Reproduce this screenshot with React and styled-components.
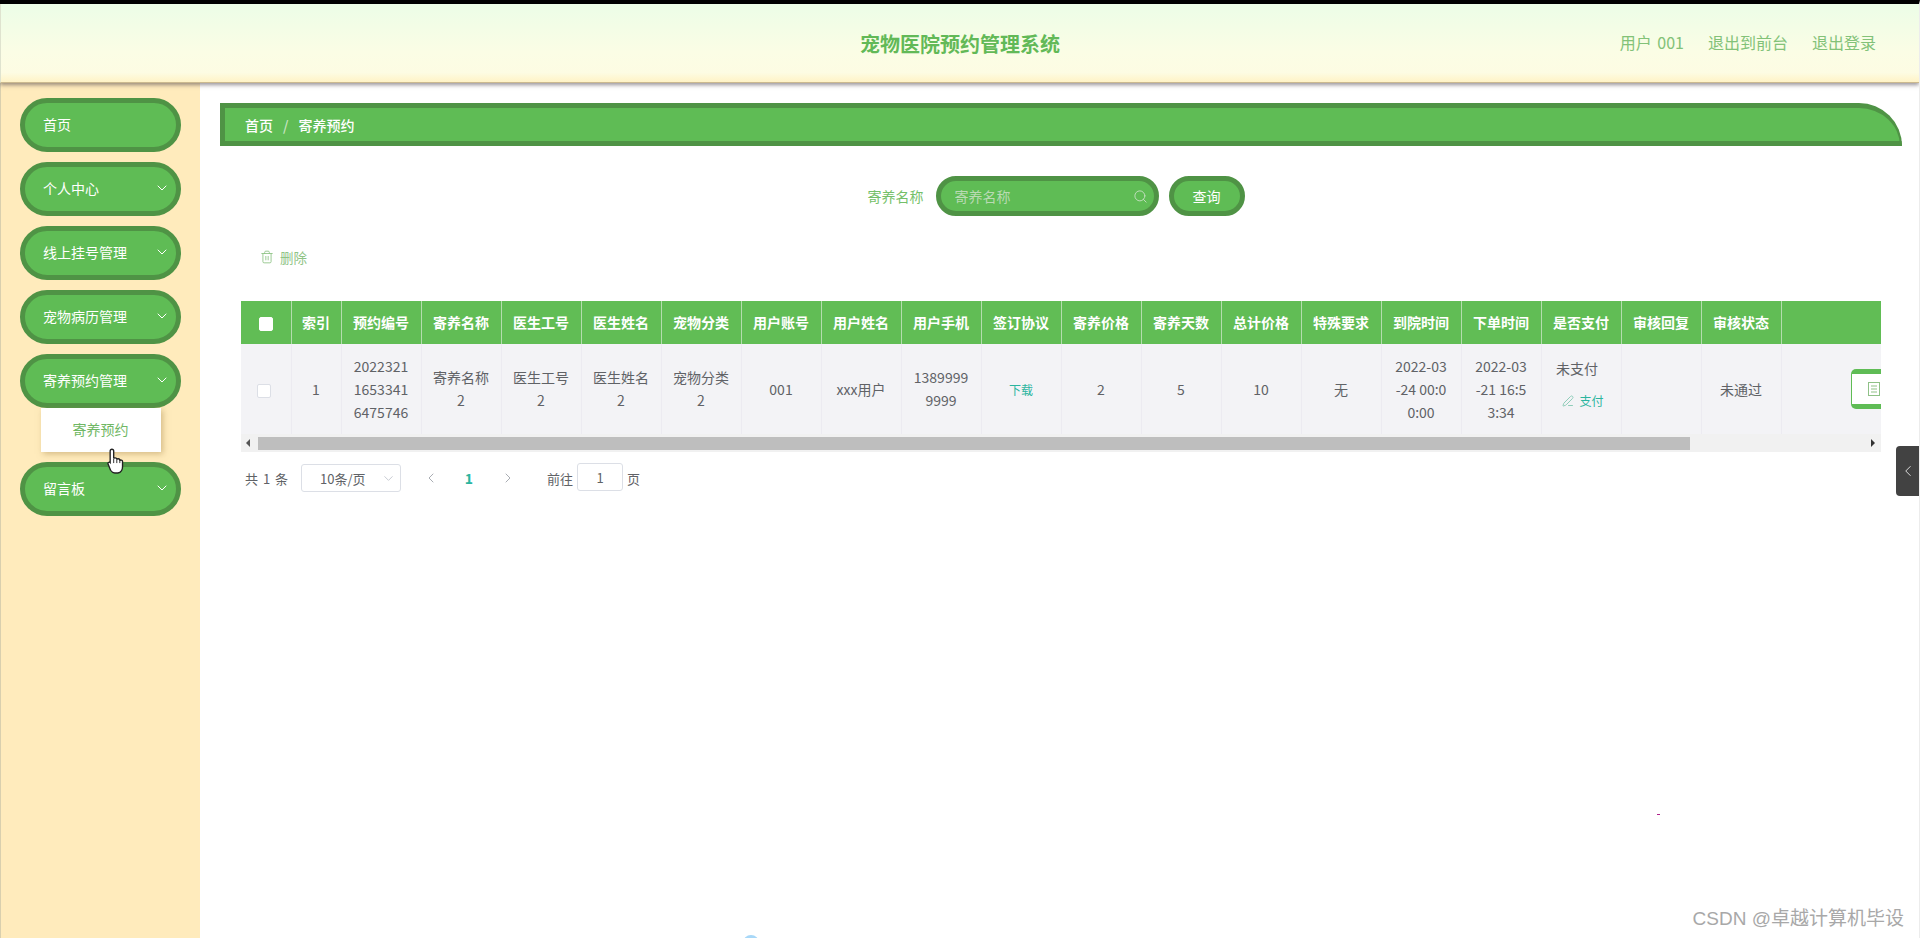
import React from 'react';
import styled, { createGlobalStyle } from 'styled-components';
import { ChevronDown, ChevronLeft, ChevronRight, PenLine, Search, Trash2 } from 'lucide-react';

const GREEN = '#5fbc55';
const DARK_GREEN = '#4f9345';
const TEAL = '#2bb59f';

const GlobalStyle = createGlobalStyle`
  html, body {
    margin: 0;
    padding: 0;
    height: 100%;
    background: #fff;
    font-family: "Noto Sans CJK SC", "Liberation Sans", sans-serif;
  }
  * { box-sizing: border-box; }
`;

const Page = styled.div`
  position: relative;
  height: 100vh;
  overflow: hidden;
  display: flex;
  flex-direction: column;
  border-top: 4px solid #000;
  border-right: 1px solid #ececec;
`;

const Header = styled.header`
  position: relative;
  z-index: 2;
  flex: 0 0 79px;
  display: grid;
  grid-template-columns: 1fr auto 1fr;
  align-items: center;
  padding-bottom: 2px;
  border-left: 1px solid #dfe3cf;
  border-bottom: 1px solid #cbb98f;
  background: linear-gradient(180deg, #ecfde7 0%, #fbfde5 62%, #fdfce3 88%, #fff3c6 100%);
  box-shadow: 0 2px 4px rgba(70, 60, 70, 0.55);
`;

const Title = styled.div`
  grid-column: 2;
  padding-top: 2px;
  font-size: 20px;
  font-weight: 700;
  color: #62b957;
`;

const HeaderLinks = styled.div`
  grid-column: 3;
  justify-self: end;
  display: flex;
  gap: 24px;
  padding-right: 43px;
  font-size: 16px;
  word-spacing: 2px;
  color: #82c278;
`;

const Body = styled.div`
  flex: 1;
  display: flex;
  min-height: 0;
`;

const Sidebar = styled.aside`
  flex: 0 0 200px;
  display: flex;
  flex-direction: column;
  gap: 10px;
  padding: 15px 19px 0 19px;
  background: #ffebbc;
  border-left: 1px solid #d9cfae;
`;

const MenuGroup = styled.div`
  display: flex;
  flex-direction: column;
`;

const MenuItem = styled.div`
  height: 54px;
  display: flex;
  align-items: center;
  justify-content: space-between;
  padding: 0 6px 2px 18px;
  border: 5px solid ${DARK_GREEN};
  border-radius: 27px;
  background: ${GREEN};
  color: #fff;
  font-size: 14px;
`;

const SubMenu = styled.div`
  align-self: center;
  width: 120px;
  height: 44px;
  display: flex;
  align-items: center;
  justify-content: center;
  padding-bottom: 2px;
  background: #fff;
  color: #6fb764;
  font-size: 14px;
  box-shadow: 2px 2px 6px rgba(170, 140, 80, 0.5);
`;

const Main = styled.main`
  flex: 1;
  min-width: 0;
  padding: 20px 17px 0 20px;
`;

const Breadcrumb = styled.div`
  height: 43px;
  display: flex;
  align-items: center;
  padding-left: 20px;
  border-style: solid;
  border-color: ${DARK_GREEN};
  border-width: 5px 2px 5px 5px;
  border-top-right-radius: 44px;
  background: ${GREEN};
  color: #fff;
  font-size: 14px;
  font-weight: 500;
`;

const Separator = styled.span`
  margin: 0 10px;
  color: #c9e4c4;
`;

const Content = styled.div`
  padding: 0 21px 0 21px;
`;

const SearchForm = styled.form`
  display: flex;
  justify-content: center;
  align-items: center;
  margin: 30px 10px 0 0;
`;

const SearchLabel = styled.label`
  margin-right: 12px;
  color: #74bf69;
  font-size: 14px;
`;

const SearchBox = styled.div`
  width: 223px;
  height: 40px;
  display: flex;
  align-items: center;
  padding: 0 6px 0 14px;
  border: 5px solid ${DARK_GREEN};
  border-radius: 20px;
  background: ${GREEN};
  color: #c4dfc0;
`;

const SearchInput = styled.input`
  flex: 1;
  min-width: 0;
  border: none;
  outline: none;
  padding: 0;
  background: transparent;
  font: inherit;
  font-size: 14px;
  color: #fff;
  &::placeholder { color: #b9dab3; opacity: 1; }
`;

const SearchButton = styled.button`
  width: 76px;
  height: 40px;
  margin-left: 10px;
  padding: 0;
  border: 5px solid ${DARK_GREEN};
  border-radius: 20px;
  background: ${GREEN};
  color: #fff;
  font: inherit;
  font-size: 14px;
`;

const Toolbar = styled.div`
  height: 40px;
  display: flex;
  align-items: center;
  gap: 6px;
  margin: 21px 0 24px;
  padding-left: 19px;
  color: #8fc486;
  font-size: 13.5px;
`;

const TableWrap = styled.div`
  overflow: hidden;
`;

const Table = styled.table`
  width: 1840px;
  table-layout: fixed;
  border-collapse: collapse;
  font-size: 14px;
  color: #606266;
`;

const Th = styled.th`
  height: 43px;
  padding: 0 0 2px;
  border-right: 1px solid #b4dcae;
  background: #61bd55;
  color: #fff;
  font-weight: 700;
  text-align: center;
`;

const Td = styled.td`
  height: 90px;
  padding: 0 10px;
  border-right: 1px solid #ecebf1;
  background: #f3f3f6;
  line-height: 23px;
  text-align: center;
  word-break: break-all;
  white-space: pre-line;
`;

const ActionTd = styled(Td)`
  padding: 0 0 0 69px;
  text-align: left;
`;

const Check = styled.span`
  display: inline-block;
  vertical-align: middle;
  width: 14px;
  height: 14px;
  margin-right: ${(p) => (p.$head ? '0' : '4px')};
  border: 1px solid ${(p) => (p.$head ? '#fff' : '#dcdfe6')};
  border-radius: 2px;
  background: #fff;
`;

const LinkText = styled.span`
  color: ${TEAL};
  font-size: 12px;
`;

const PayCell = styled.div`
  margin-top: -8px;
`;

const PayStatus = styled.div`
  padding-right: 8px;
`;

const PayLink = styled(LinkText)`
  display: inline-flex;
  align-items: center;
  gap: 5px;
  margin-top: 9px;
  padding-left: 4px;
  svg { color: #8fcdb9; }
`;

const ActionButton = styled.div`
  width: 90px;
  height: 40px;
  display: flex;
  align-items: center;
  padding-left: 16px;
  border: solid ${GREEN};
  border-width: 5px 0 5px 1px;
  border-radius: 5px;
  background: #fff;
`;

const ScrollBar = styled.div`
  height: 18px;
  display: flex;
  align-items: center;
  padding: 0 5px;
  background: #f1f1f1;
`;

const ScrollThumb = styled.div`
  width: 1432px;
  height: 13px;
  margin-left: 8px;
  background: #bebebe;
`;

const ScrollArrow = styled.span`
  width: 0;
  height: 0;
  border-top: 4px solid transparent;
  border-bottom: 4px solid transparent;
  border-right: ${(p) => (p.$right ? 'none' : '4px solid #555')};
  border-left: ${(p) => (p.$right ? '4px solid #333' : 'none')};
  margin-left: ${(p) => (p.$right ? 'auto' : '0')};
  margin-right: ${(p) => (p.$right ? '1px' : '0')};
`;

const Pagination = styled.div`
  display: flex;
  align-items: center;
  height: 28px;
  margin-top: 13px;
  padding: 0 0 2px 4px;
  font-size: 13px;
  color: #606266;
`;

const Total = styled.span`
  width: 42px;
  margin-right: 14px;
  white-space: nowrap;
  word-spacing: 2px;
`;

const PageSize = styled.div`
  width: 100px;
  height: 28px;
  display: flex;
  align-items: center;
  justify-content: space-between;
  padding: 0 4px 0 18px;
  border: 1px solid #dcdfe6;
  border-radius: 3px;
  color: #606266;
  svg { color: #c0c4cc; }
`;

const Pager = styled.span`
  width: 38px;
  display: flex;
  justify-content: center;
  color: ${(p) => (p.$active ? TEAL : '#a9adb3')};
  font-weight: ${(p) => (p.$active ? 700 : 400)};
  font-size: 14px;
  margin-left: ${(p) => p.$gap || 0}px;
`;

const Jump = styled.span`
  margin-left: 20px;
`;

const JumpBox = styled.div`
  width: 46px;
  height: 28px;
  display: flex;
  align-items: center;
  justify-content: center;
  margin: -2px 4px 0 4px;
  border: 1px solid #dcdfe6;
  border-radius: 3px;
`;

const SideToggle = styled.div`
  position: absolute;
  top: 442px;
  right: -1px;
  width: 24px;
  height: 50px;
  display: flex;
  align-items: center;
  justify-content: center;
  border-radius: 4px 0 0 4px;
  background: #424242;
  color: #ddd;
`;

const Watermark = styled.div`
  position: absolute;
  right: 15px;
  bottom: 7px;
  font-family: "Liberation Sans", "Noto Sans CJK SC", sans-serif;
  font-size: 19px;
  line-height: 24px;
  color: #a8a8a8;
`;

const Speck = styled.div`
  position: absolute;
  left: 1657px;
  top: 810px;
  width: 3px;
  height: 1px;
  background: #b0208a;
`;

const BlueDot = styled.div`
  position: absolute;
  left: 743px;
  top: 931px;
  width: 16px;
  height: 16px;
  border-radius: 50%;
  background: #a8d8f8;
`;

const HandCursor = styled.svg`
  position: absolute;
  left: 107px;
  top: 444px;
`;

const headers = [
  '索引', '预约编号', '寄养名称', '医生工号', '医生姓名', '宠物分类', '用户账号', '用户姓名', '用户手机',
  '签订协议', '寄养价格', '寄养天数', '总计价格', '特殊要求', '到院时间', '下单时间', '是否支付', '审核回复', '审核状态',
];

const row = [
  '1', '202232116533416475746', '寄养名称2', '医生工号2', '医生姓名2', '宠物分类2', '001', 'xxx用户', '13899999999',
];

const menus = ['个人中心', '线上挂号管理', '宠物病历管理'];

const TicketIcon = () => (
  <svg width="12" height="14" viewBox="0 0 12 14" fill="none" stroke="#8fc187" strokeWidth="1">
    <rect x="0.5" y="0.5" width="11" height="13" />
    <path d="M3 4h6M3 7h6M3 10h6" />
  </svg>
);

const MenuArrow = () => <ChevronDown size={16} strokeWidth={1.5} />;

const App = () => {
  return (
    <Page>
      <GlobalStyle />
      <Header>
        <Title>宠物医院预约管理系统</Title>
        <HeaderLinks>
          <span>用户 001</span>
          <span>退出到前台</span>
          <span>退出登录</span>
        </HeaderLinks>
      </Header>
      <Body>
        <Sidebar>
          <MenuItem>首页</MenuItem>
          {menus.map((m) => (
            <MenuItem key={m}>
              {m}
              <MenuArrow />
            </MenuItem>
          ))}
          <MenuGroup>
            <MenuItem>
              寄养预约管理
              <MenuArrow />
            </MenuItem>
            <SubMenu>寄养预约</SubMenu>
          </MenuGroup>
          <MenuItem>
            留言板
            <MenuArrow />
          </MenuItem>
        </Sidebar>
        <Main>
          <Breadcrumb>
            首页
            <Separator>/</Separator>
            寄养预约
          </Breadcrumb>
          <Content>
            <SearchForm>
              <SearchLabel>寄养名称</SearchLabel>
              <SearchBox>
                <SearchInput placeholder="寄养名称" readOnly />
                <Search size={15} strokeWidth={1.5} />
              </SearchBox>
              <SearchButton type="button">查询</SearchButton>
            </SearchForm>
            <Toolbar>
              <Trash2 size={14} strokeWidth={1.5} />
              删除
            </Toolbar>
            <TableWrap>
              <Table>
                <colgroup>
                  <col width="50" />
                  <col width="50" />
                  {headers.slice(1).map((h) => (
                    <col key={h} width="80" />
                  ))}
                  <col width="300" />
                </colgroup>
                <thead>
                  <tr>
                    <Th>
                      <Check $head />
                    </Th>
                    {headers.map((h) => (
                      <Th key={h}>{h}</Th>
                    ))}
                    <Th />
                  </tr>
                </thead>
                <tbody>
                  <tr>
                    <Td>
                      <Check />
                    </Td>
                    {row.map((c, i) => (
                      <Td key={i}>{c}</Td>
                    ))}
                    <Td>
                      <LinkText>下载</LinkText>
                    </Td>
                    <Td>2</Td>
                    <Td>5</Td>
                    <Td>10</Td>
                    <Td>无</Td>
                    <Td>{'2022-03\n-24 00:0\n0:00'}</Td>
                    <Td>{'2022-03\n-21 16:5\n3:34'}</Td>
                    <Td>
                      <PayCell>
                        <PayStatus>未支付</PayStatus>
                        <PayLink>
                          <PenLine size={12} />
                          支付
                        </PayLink>
                      </PayCell>
                    </Td>
                    <Td />
                    <Td>未通过</Td>
                    <ActionTd>
                      <ActionButton>
                        <TicketIcon />
                      </ActionButton>
                    </ActionTd>
                  </tr>
                </tbody>
              </Table>
            </TableWrap>
            <ScrollBar>
              <ScrollArrow />
              <ScrollThumb />
              <ScrollArrow $right />
            </ScrollBar>
            <Pagination>
              <Total>共 1 条</Total>
              <PageSize>
                10条/页
                <ChevronDown size={15} strokeWidth={1.4} />
              </PageSize>
              <Pager $gap={11}>
                <ChevronLeft size={16} strokeWidth={1.5} />
              </Pager>
              <Pager $active>1</Pager>
              <Pager $gap={1}>
                <ChevronRight size={16} strokeWidth={1.5} />
              </Pager>
              <Jump>前往</Jump>
              <JumpBox>1</JumpBox>
              <span>页</span>
            </Pagination>
          </Content>
        </Main>
      </Body>
      <SideToggle>
        <ChevronLeft size={18} strokeWidth={1.3} />
      </SideToggle>
      <Watermark>CSDN @卓越计算机毕设</Watermark>
      <Speck />
      <BlueDot />
      <HandCursor width="19" height="26" viewBox="0 0 18 25">
        <path
          d="M4.6 1.2c1 0 1.7.8 1.7 1.8v7.2c.3-1 2.8-1 3 .3v.6c.3-1.2 2.7-1 2.9.4v.7c.4-1 2.5-.8 2.6.6v5.2c0 3-1.5 5.5-4.5 6h-3c-2 0-3-1-4-2.6L1 15.6c-.8-1.4 1-2.6 1.9-1.6V3c0-1 .7-1.8 1.7-1.8z"
          fill="#fff"
          stroke="#222"
          strokeWidth="1.3"
        />
        <path d="M6.3 10.5v4M9.3 11v3.5M12.2 11.8v2.7" stroke="#222" strokeWidth="0.9" fill="none" />
      </HandCursor>
    </Page>
  );
};

export default App;
